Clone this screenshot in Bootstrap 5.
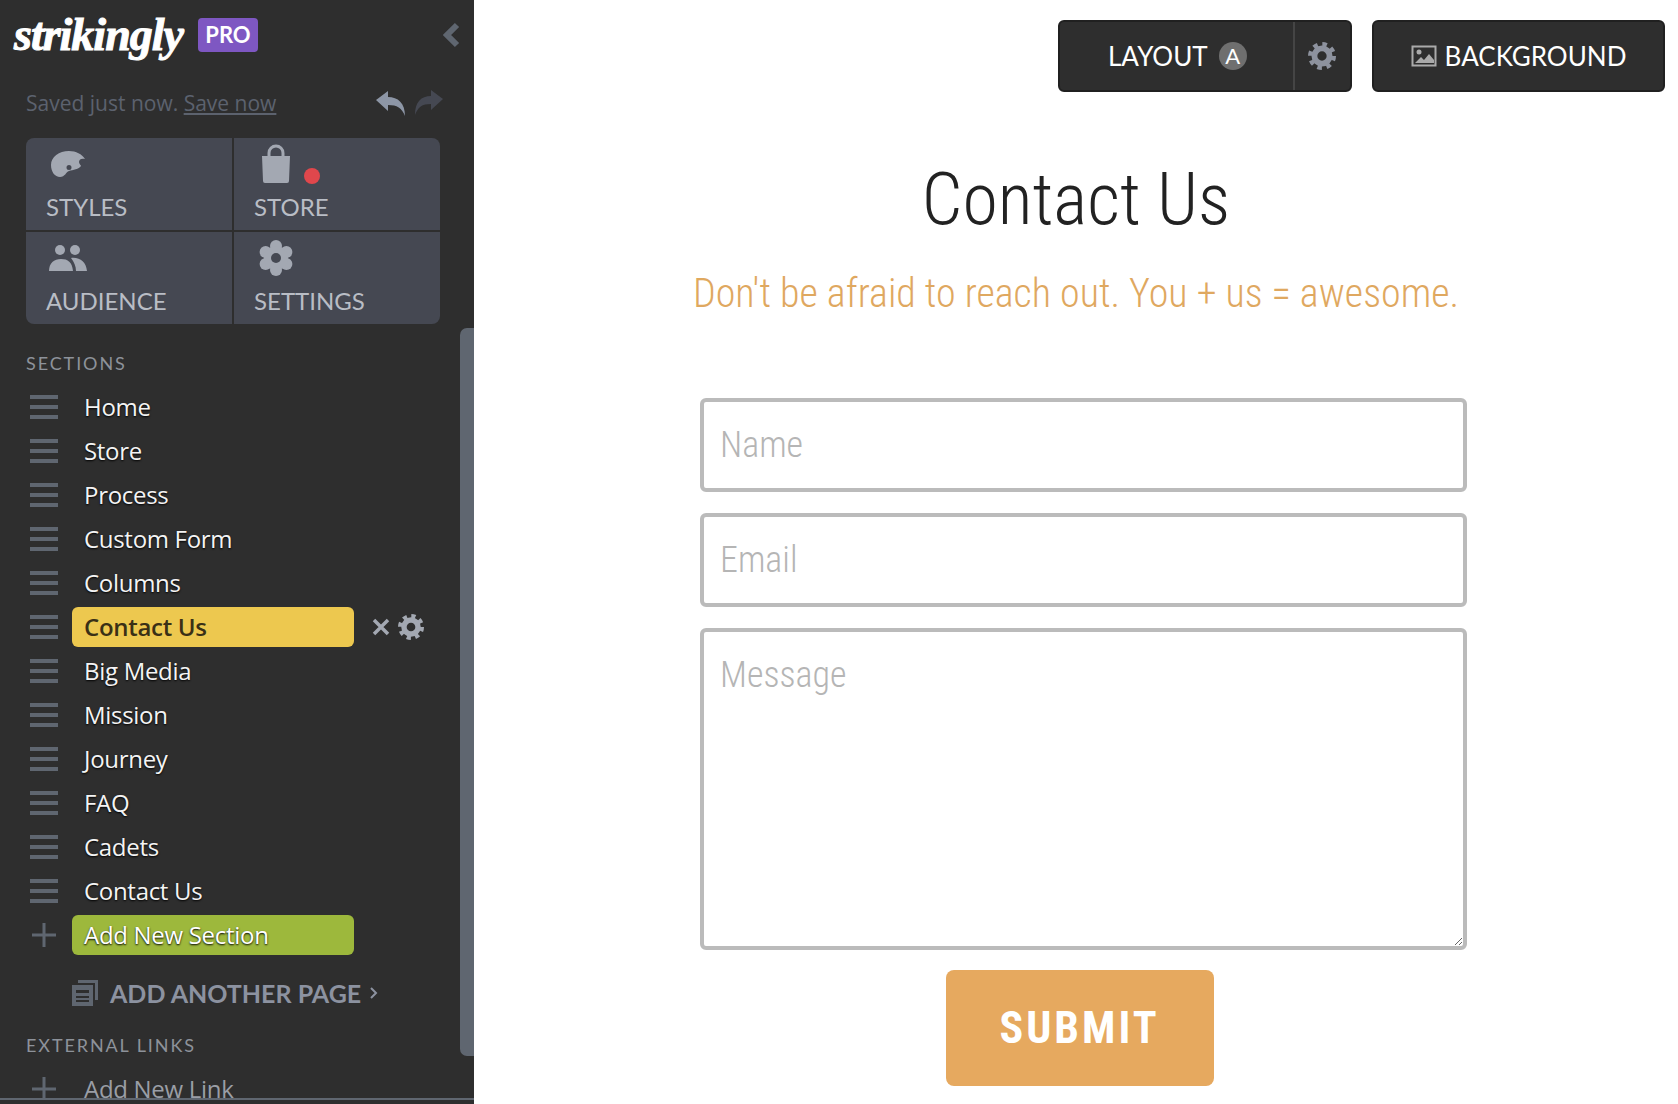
<!DOCTYPE html>
<html lang="en">
<head>
<meta charset="utf-8">
<title>Strikingly editor</title>
<link href="https://cdn.jsdelivr.net/npm/bootstrap@5.3.0/dist/css/bootstrap.min.css" rel="stylesheet">
<style>
html,body{height:100%;margin:0;overflow:hidden;background:#fff}
.app{height:1104px}
.side{width:474px;flex:none;background:#2e2e2e;position:relative;font-family:"Open Sans",sans-serif}
.side-scroll{height:1098px;overflow:hidden}
.side-foot{height:6px;border-top:2px solid #5f6670}
.thumb{position:absolute;left:460px;top:328px;width:14px;height:728px;background:#5f6670;border-radius:7px 0 0 7px}
.head{height:70px;padding:0 13px 0 14px}
.logo{font-family:"Liberation Serif",serif;font-weight:700;font-style:italic;font-size:46px;color:#fff;letter-spacing:-1px;width:184px;line-height:1;-webkit-text-stroke:1px #fff}
.pro{background:#7e57c2;color:#fff;font:700 22px/34px Lato,sans-serif;width:60px;height:34px;text-align:center;border-radius:4px}
.saved{height:68px;padding:0 30px 0 26px;color:#5c626e;font-size:21px}
.saved a{color:#5c626e}
.tools{margin:0 34px 0 26px;display:grid;grid-template-columns:206px 206px;grid-auto-rows:92px;gap:2px;border-radius:8px;overflow:hidden}
.tool{background:#454852;padding:6px 0 0 20px;color:#b9bdc5;font:400 24px/28px Lato,sans-serif}
.tool svg{margin-left:2px;display:block}
.tool-icons{height:40px;margin-bottom:9px}
.dot{width:16px;height:16px;border-radius:50%;background:#e0474c;margin:24px 0 0 8px}
.sec-label{font:400 18px/22px Lato,sans-serif;letter-spacing:1.9px;color:#8d929a;padding-left:26px}
.l1{padding-top:28px;height:61px}
.l2{height:32px;padding-top:5px}
.sec{height:44px;padding-left:30px;color:#f4f4f4;font-size:24px;text-shadow:0 1px 2px #000}
.burger{width:28px;height:24px;flex:none;margin-right:14px;background:linear-gradient(#5f6670 4px,transparent 4px) 0 0/28px 10px repeat-y}
.plus{width:28px;height:28px;flex:none;margin-right:14px;position:relative}
.sec-name{width:282px;height:40px;line-height:40px;padding-left:12px;border-radius:6px;letter-spacing:-.3px}
.on{background:#edc84f;color:#3a3016;text-shadow:none;font-weight:600}
.green{background:#9db83c;color:#fff}
.sec-tools{margin-left:18px;gap:8px}
.another{height:72px;padding-left:72px;color:#8c92a0;font:700 25px/1 Lato,sans-serif}
.another svg{margin-right:12px}
.link-row{margin-top:6px;color:#9a9ea6;text-shadow:none}
.stage{flex:1;min-width:0;position:relative}
.bar{padding:20px 13px 0 0;gap:20px}
.edit-btn{height:72px;background:#2e2e2e;border:2px solid #202020;border-radius:6px;color:#fff;font:400 26px/1 Lato,sans-serif;padding:0}
.edit-btn:hover{background:#2e2e2e;color:#fff}
.pill{width:28px;height:28px;border-radius:14px;background:#6f6f6f;font-size:22px;line-height:28px;text-align:center;margin-left:11px}
.sep{width:2px;align-self:stretch;background:#454545;margin-left:46px}
.title{font-family:Roboto,sans-serif;font-weight:300;font-stretch:75%;font-size:72px;line-height:80px;color:#222;margin:68px 0 0;text-align:center;padding-right:0}
.sub{font-family:Roboto,sans-serif;font-weight:300;font-stretch:75%;font-size:40px;line-height:48px;color:#dfa860;margin:30px 0 0;text-align:center}
.contact{width:767px;margin:80px 0 0 226px}
.field{display:block;width:100%;border:4px solid #bbb;border-radius:6px;font-family:Roboto,sans-serif;font-weight:300;font-stretch:75%;font-size:36px;padding:0 16px;color:#333;background:#fff;outline:0}
.field::placeholder{color:#b5b5b5;opacity:1}
.one{height:94px;margin-bottom:21px}
.msg{height:322px;padding-top:16px;resize:both;margin-bottom:20px}
.send{width:268px;height:116px;display:block;margin:0 auto;position:relative;left:-4px;background:#e6a95f;border:0;border-radius:8px;color:#fff;font:700 44px/1 Roboto,sans-serif;font-stretch:75%;letter-spacing:3px}
.send:hover{background:#e6a95f;color:#fff}
</style>
</head>
<body>
<svg width="0" height="0" class="d-none">
<symbol id="gear" viewBox="0 0 24 24"><circle cx="12" cy="12" r="6.5" fill="none" stroke="currentColor" stroke-width="5"/><circle cx="12" cy="12" r="10" fill="none" stroke="currentColor" stroke-width="4" stroke-dasharray="3.85 4"/></symbol>
<symbol id="lines" viewBox="0 0 26 26"><path fill="currentColor" d="M6 0h20v20h-3V3H6zM0 5h21v21H0zm4 5v3h13v-3zm0 6v2h13v-2zm0 4v2h13v-2z" fill-rule="evenodd"/></symbol>
</svg>
<div class="app d-flex">
<aside class="side d-flex flex-column">
<div class="side-scroll">
<div class="head d-flex align-items-center">
<span class="logo">strikingly</span>
<span class="pro">PRO</span>
<svg class="ms-auto" width="18" height="26" viewBox="0 0 18 26"><path d="M14 3 4 13l10 10" fill="none" stroke="#5f6670" stroke-width="6"/></svg>
</div>
<div class="saved d-flex align-items-center">
<span>Saved just now. <a href="#">Save now</a></span>
<svg class="ms-auto" width="30" height="26" viewBox="0 0 30 26"><path fill="#8d96a6" d="M0 9 12 0v6c10 0 17 6 17 19-3-8-8-11-17-11v6z"/></svg>
<svg class="ms-2" style="margin-top:-2px" width="30" height="26" viewBox="0 0 30 26"><path fill="#454852" d="M29 9 17 0v6C7 6 1 12 1 25c3-8 7-11 16-11v6z"/></svg>
</div>
<div class="tools">
<div class="tool"><div class="tool-icons"><svg width="40" height="40" viewBox="0 0 40 40"><path fill="#a3a8b2" fill-rule="evenodd" d="M3 21C3 13 11 7 21 7c7 0 13 3 16 8-3-1-6 0-6 3 0 2 2 3 2 4-2 3-8 4-12 5-3 1-4 6-9 6-5 0-9-5-9-12zm18 5a2.500 2.500 0 1 0 0-5 2.500 2.500 0 0 0 0 5z"/></svg></div>STYLES</div>
<div class="tool"><div class="tool-icons d-flex"><svg width="40" height="40" viewBox="0 0 40 40"><path fill="none" stroke="#a3a8b2" stroke-width="3" d="M13 15V9a7 7 0 0 1 14 0v6"/><path fill="#a3a8b2" d="M6 12h28l-1 25a2 2 0 0 1-2 2H9a2 2 0 0 1-2-2z"/></svg><span class="dot"></span></div>STORE</div>
<div class="tool"><div class="tool-icons"><svg width="40" height="40" viewBox="0 0 40 40"><g fill="#a3a8b2"><circle cx="12" cy="12" r="5"/><circle cx="27" cy="12" r="5"/><path d="M1 33c0-8 5-12 12-12s11 3 12 12z"/><path d="M23 20c9-1 15 4 16 13H28c0-5-2-9-5-13z"/></g></svg></div>AUDIENCE</div>
<div class="tool"><div class="tool-icons"><svg width="40" height="40" viewBox="0 0 40 40"><g fill="#a3a8b2"><circle cx="20" cy="8" r="6"/><circle cx="20" cy="32" r="6"/><circle cx="9.600" cy="14" r="6"/><circle cx="30.400" cy="14" r="6"/><circle cx="9.600" cy="26" r="6"/><circle cx="30.400" cy="26" r="6"/><circle cx="20" cy="20" r="12"/></g><circle cx="20" cy="20" r="5" fill="#454852"/></svg></div>SETTINGS</div>
</div>
<div class="sec-label l1">SECTIONS</div>
<div class="sec d-flex align-items-center"><span class="burger"></span><span class="sec-name">Home</span></div>
<div class="sec d-flex align-items-center"><span class="burger"></span><span class="sec-name">Store</span></div>
<div class="sec d-flex align-items-center"><span class="burger"></span><span class="sec-name">Process</span></div>
<div class="sec d-flex align-items-center"><span class="burger"></span><span class="sec-name">Custom Form</span></div>
<div class="sec d-flex align-items-center"><span class="burger"></span><span class="sec-name">Columns</span></div>
<div class="sec d-flex align-items-center"><span class="burger"></span><span class="sec-name on">Contact Us</span>
<span class="sec-tools d-flex align-items-center"><svg width="18" height="18" viewBox="0 0 18 18"><path d="M2 2l14 14M16 2 2 16" stroke="#a3a8b2" stroke-width="3.500"/></svg><svg width="26" height="26" style="color:#a3a8b2"><use href="#gear"/></svg></span></div>
<div class="sec d-flex align-items-center"><span class="burger"></span><span class="sec-name">Big Media</span></div>
<div class="sec d-flex align-items-center"><span class="burger"></span><span class="sec-name">Mission</span></div>
<div class="sec d-flex align-items-center"><span class="burger"></span><span class="sec-name">Journey</span></div>
<div class="sec d-flex align-items-center"><span class="burger"></span><span class="sec-name">FAQ</span></div>
<div class="sec d-flex align-items-center"><span class="burger"></span><span class="sec-name">Cadets</span></div>
<div class="sec d-flex align-items-center"><span class="burger"></span><span class="sec-name">Contact Us</span></div>
<div class="sec d-flex align-items-center"><svg class="plus" viewBox="0 0 28 28"><path d="M14 2v24M2 14h24" stroke="#5f6670" stroke-width="3"/></svg><span class="sec-name green">Add New Section</span></div>
<div class="another d-flex align-items-center"><svg width="26" height="26" style="color:#5f6670"><use href="#lines"/></svg>ADD ANOTHER PAGE<svg class="ms-2 me-0" width="10" height="14" viewBox="0 0 10 14"><path d="M2 2l5 5-5 5" fill="none" stroke="#8c92a0" stroke-width="2"/></svg></div>
<div class="sec-label l2">EXTERNAL LINKS</div>
<div class="sec link-row d-flex align-items-center"><svg class="plus" viewBox="0 0 28 28"><path d="M14 2v24M2 14h24" stroke="#5f6670" stroke-width="3"/></svg><span class="sec-name">Add New Link</span></div>
</div>
<div class="side-foot"></div>
<div class="thumb"></div>
</aside>
<main class="stage">
<div class="bar d-flex justify-content-end">
<button class="btn edit-btn d-flex align-items-center" style="width:294px"><span class="ms-auto ps-5">LAYOUT</span><span class="pill">A</span><span class="sep"></span><span class="d-flex justify-content-center flex-grow-1" style="color:#8d929e"><svg width="28" height="28"><use href="#gear"/></svg></span></button>
<button class="btn edit-btn d-flex align-items-center justify-content-center" style="width:293px"><svg class="me-2" width="26" height="22" viewBox="0 0 26 22"><rect x="1.500" y="1.500" width="23" height="19" fill="none" stroke="#aaa" stroke-width="2"/><circle cx="8" cy="7" r="2.500" fill="#aaa"/><path d="M4 18l6-6 3 3 5-6 5 6v3z" fill="#aaa"/></svg>BACKGROUND</button>
</div>
<h1 class="title">Contact Us</h1>
<p class="sub">Don't be afraid to reach out. You + us = awesome.</p>
<form class="contact">
<input class="field one" type="text" placeholder="Name">
<input class="field one" type="text" placeholder="Email">
<textarea class="field msg" placeholder="Message"></textarea>
<button class="btn send" type="button">SUBMIT</button>
</form>
</main>
</div>
<script src="https://cdn.jsdelivr.net/npm/bootstrap@5.3.0/dist/js/bootstrap.bundle.min.js"></script>
</body>
</html>
